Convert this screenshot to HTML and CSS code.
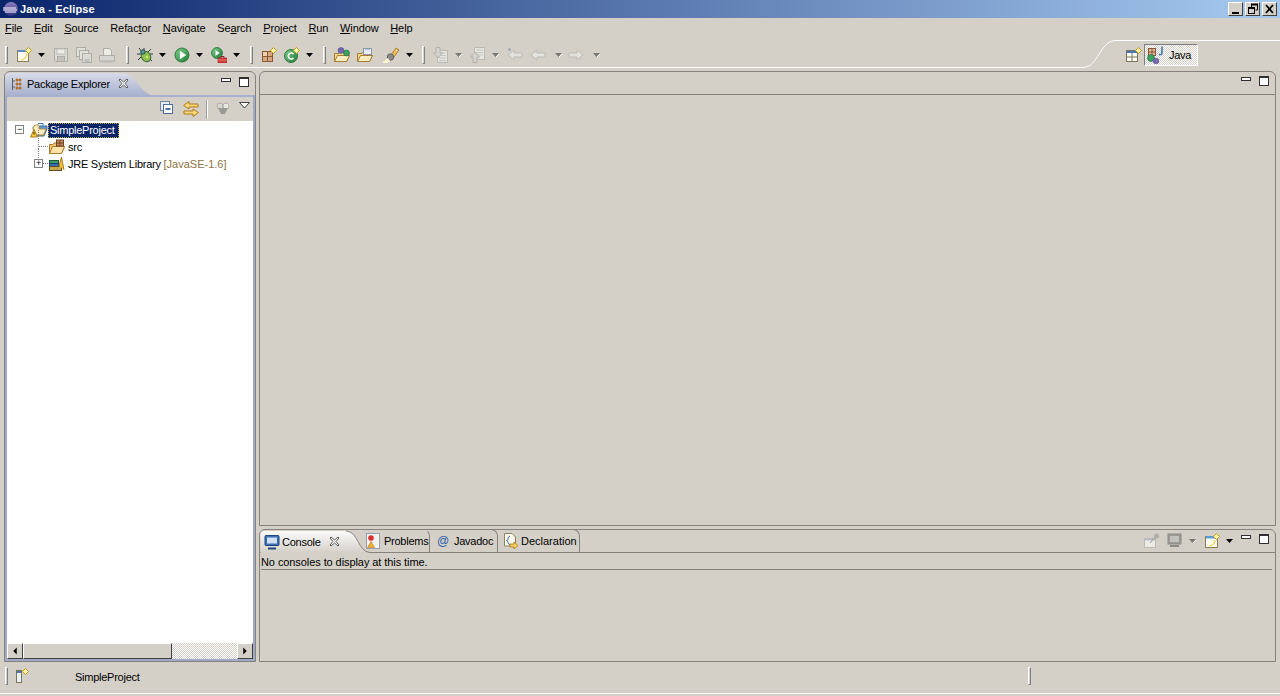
FILE: index.html
```html
<!DOCTYPE html>
<html lang="en">
<head>
    <meta charset="UTF-8">
    <title>Java - Eclipse</title>
    <link rel="stylesheet" href="styles.css">
</head>
<body>

<svg class="icon-defs" width="0" height="0">
    <defs>
        <linearGradient id="greenBall" x1="0" y1="0" x2="1" y2="1"><stop offset="0" stop-color="#7fd08a"/><stop offset="1" stop-color="#1f7a3a"/></linearGradient>
        <linearGradient id="eclipseBall" x1="0" y1="0" x2="0" y2="1"><stop offset="0" stop-color="#8c80c0"/><stop offset="1" stop-color="#302c80"/></linearGradient>
        <symbol id="i-new" viewBox="0 0 16 16">
            <rect x="1.5" y="3.5" width="11" height="11" fill="#fdfdf4" stroke="#8e7d52"/><rect x="2" y="3" width="10" height="2" fill="#5c8ac4"/>
            <path d="M11 6 Q11 12 5 13" fill="none" stroke="#f4d668" stroke-width="1.4"/>
            <path d="M12.5 0.5 L15.5 3.5 L12.5 6.5 L9.5 3.5Z" fill="#fff6b0" stroke="#c79a10"/>
        </symbol>
        <symbol id="i-save" viewBox="0 0 16 16">
            <path d="M1.5 1.5H14.5V14.5H3L1.5 13Z" fill="#dcdad4" stroke="#aeaca6"/><rect x="4" y="2" width="8" height="5" fill="#eeede9" stroke="#bdbbb5"/><rect x="4.5" y="9.5" width="7" height="5" fill="#c4c2bc" stroke="#aeaca6"/>
        </symbol>
        <symbol id="i-saveall" viewBox="0 0 16 16">
            <rect x="0.5" y="0.5" width="9" height="9" fill="#e2e0da" stroke="#aeaca6"/><rect x="3.5" y="3.5" width="9" height="9" fill="#e2e0da" stroke="#aeaca6"/><rect x="6.5" y="6.5" width="9" height="9" fill="#dcdad4" stroke="#aeaca6"/><rect x="8.5" y="12" width="5" height="3" fill="#c0beb8"/>
        </symbol>
        <symbol id="i-print" viewBox="0 0 16 16">
            <path d="M4.5 1.5H10.5L12.5 3.5V8.5H4.5Z" fill="#ecebe7" stroke="#aeaca6"/><rect x="0.5" y="8.5" width="15" height="5.5" fill="#d8d6d0" stroke="#aeaca6"/><rect x="2" y="14" width="12" height="1.5" fill="#bdbbb5"/>
        </symbol>
        <symbol id="i-debug" viewBox="0 0 16 16">
            <path d="M2 1L5 5M14 2L11 5M0 7H4M12 7H16M1 13L4 10M15 14L12 11M7 1L7 3" stroke="#2c3c3c" fill="none"/>
            <ellipse cx="9" cy="9.5" rx="4.5" ry="5.5" transform="rotate(-35 9 9.5)" fill="#90c050" stroke="#3c6c3c"/><circle cx="6" cy="5" r="2.2" fill="#5a9c9c" stroke="#2c4c4c"/><circle cx="10" cy="10" r="1.2" fill="#d8e868"/>
        </symbol>
        <symbol id="i-run" viewBox="0 0 16 16">
            <circle cx="8" cy="8" r="7" fill="url(#greenBall)" stroke="#2a7a40"/><path d="M6 4L12 8L6 12Z" fill="#fff" stroke="#d8f0d8" stroke-width="0.5"/>
        </symbol>
        <symbol id="i-ext" viewBox="0 0 16 16">
            <circle cx="6" cy="6" r="5.4" fill="url(#greenBall)" stroke="#2a7a40"/><path d="M4.5 3L8.5 6L4.5 9Z" fill="#fff"/>
            <rect x="7" y="11" width="9" height="5" fill="#d83c3c" stroke="#982020" stroke-width="0.6"/><path d="M10 11V9.5H13V11" fill="none" stroke="#982020"/><path d="M7 13H16" stroke="#f0a0a0" stroke-width="0.6"/>
        </symbol>
        <symbol id="i-pkg" viewBox="0 0 16 16">
            <rect x="1.5" y="4.5" width="10" height="10" fill="#d8a880" stroke="#8a5a38"/><path d="M6.5 4.5V14.5M1.5 9.5H11.5" stroke="#8a5a38"/><rect x="2" y="5" width="4" height="4" fill="#f0d0b0"/>
            <path d="M12.5 0.5 L15.5 3.5 L12.5 6.5 L9.5 3.5Z" fill="#fff6b0" stroke="#c79a10"/>
        </symbol>
        <symbol id="i-class" viewBox="0 0 16 16">
            <circle cx="7" cy="9" r="6.5" fill="url(#greenBall)" stroke="#2a7a40"/><path d="M9.5 7A3 3 0 1 0 9.5 11" fill="none" stroke="#fff" stroke-width="1.6"/>
            <path d="M12.5 0.5 L15.5 3.5 L12.5 6.5 L9.5 3.5Z" fill="#fff6b0" stroke="#c79a10"/>
        </symbol>
        <symbol id="i-openprj" viewBox="0 0 16 16">
            <path d="M0.5 14.5V6.5H5L6 5H11V8.5H15.5L12.5 14.5Z" fill="#f8d890" stroke="#a87c30"/><path d="M0.5 14.5L3.5 8.5H15.5L12.5 14.5Z" fill="#fcecc0" stroke="#a87c30"/>
            <circle cx="7" cy="3.5" r="3" fill="#7868b0" stroke="#50488c" stroke-width="0.6"/><circle cx="12.5" cy="6" r="3" fill="#3ca060" stroke="#206c40" stroke-width="0.6"/>
        </symbol>
        <symbol id="i-opentype" viewBox="0 0 16 16">
            <path d="M0.5 14.5V6.5H5L6 5H13V8.5H15.5L12.5 14.5Z" fill="#f8d890" stroke="#a87c30"/><rect x="6.5" y="1.5" width="8" height="6" fill="#e8ecf8" stroke="#9098a8"/><rect x="8" y="1" width="5" height="1.5" fill="#8898b8"/><path d="M0.5 14.5L3.5 8.5H15.5L12.5 14.5Z" fill="#fcecc0" stroke="#a87c30"/>
        </symbol>
        <symbol id="i-search" viewBox="0 0 18 16">
            <path d="M9 8L14 1L17 3L12 10Z" fill="#f0b850" stroke="#b08030"/><circle cx="14.5" cy="3.5" r="0.8" fill="#fff"/><circle cx="8.5" cy="10" r="3.2" fill="#8c8c8c" stroke="#606060"/><path d="M1 15L6 11L8 14L5 16H1Z" fill="#fff8d0"/>
        </symbol>
        <symbol id="i-nextann" viewBox="0 0 16 16">
            <rect x="4.5" y="3.5" width="10" height="12" fill="#e6e4de" stroke="#bbb9b3"/><path d="M6 6H13M6 8.5H13M6 11H13M6 13.5H13" stroke="#c8c6c0"/><path d="M3 0.5H7V6H9.5L5 11L0.5 6H3Z" fill="#d4d2cc" stroke="#b4b2ac"/>
        </symbol>
        <symbol id="i-prevann" viewBox="0 0 16 16">
            <rect x="4.5" y="0.5" width="10" height="12" fill="#e6e4de" stroke="#bbb9b3"/><path d="M6 3H13M6 5.5H13M6 8H13" stroke="#c8c6c0"/><path d="M3 15.5H7V10H9.5L5 5L0.5 10H3Z" fill="#d4d2cc" stroke="#b4b2ac"/>
        </symbol>
        <symbol id="i-last" viewBox="0 0 16 16">
            <path d="M7 3L1 8L7 13V10H15V6H7Z" fill="#e4e2dc" stroke="#bcbab4"/><circle cx="2.5" cy="2.5" r="1.5" fill="#a8a8b0"/>
        </symbol>
        <symbol id="i-back" viewBox="0 0 16 16"><path d="M7 3L1 8L7 13V10H15V6H7Z" fill="#e4e2dc" stroke="#bcbab4"/></symbol>
        <symbol id="i-fwd" viewBox="0 0 16 16"><path d="M9 3L15 8L9 13V10H1V6H9Z" fill="#e4e2dc" stroke="#bcbab4"/></symbol>
        <symbol id="i-persp" viewBox="0 0 16 16">
            <rect x="0.5" y="3.5" width="11" height="11" fill="#fbfbf4" stroke="#7a7458"/><rect x="1" y="4" width="10" height="2" fill="#4878b8"/><path d="M6 6V14.5M1 10H11" stroke="#7a7458"/>
            <path d="M12.5 0.5 L15.5 3.5 L12.5 6.5 L9.5 3.5Z" fill="#fff6b0" stroke="#c79a10"/>
        </symbol>
        <symbol id="i-java" viewBox="0 0 18 18">
            <rect x="1.5" y="2.5" width="7" height="7" fill="#e0b898" stroke="#8a5a38"/><path d="M5 2.5V9.5M1.5 6H8.5" stroke="#8a5a38"/>
            <path d="M15 0.5V7Q15 9 12 8.5" fill="none" stroke="#3c78b8" stroke-width="1.6"/>
            <circle cx="4" cy="12" r="3.5" fill="#3ca060" stroke="#206c40" stroke-width="0.6"/><circle cx="9" cy="15" r="2.8" fill="#7868b0" stroke="#50488c" stroke-width="0.6"/>
        </symbol>
        <symbol id="i-pkgex" viewBox="0 0 16 16">
            <path d="M2.5 2V14" stroke="#606060"/><path d="M2.5 5H5M2.5 11H5" stroke="#606060"/>
            <path d="M6 3H8V5H6ZM9 3H11V5H9ZM6 7H8V9H6ZM9 7H11V9H9ZM6 11H8V13H6ZM9 11H11V13H9Z" fill="#d88028" stroke="#a05c18" stroke-width="0.6"/>
        </symbol>
        <symbol id="i-collapse" viewBox="0 0 16 16">
            <rect x="0.5" y="0.5" width="9" height="9" fill="#e8ecf4" stroke="#7088a8"/><rect x="3.5" y="3.5" width="9" height="9" fill="#fff" stroke="#4c6c98"/><path d="M5.5 8H10.5" stroke="#1c4c98" stroke-width="1.6"/>
        </symbol>
        <symbol id="i-link" viewBox="0 0 16 16">
            <path d="M6 0.5L0.5 4.5L6 8V6H15V3H6Z" fill="#f8d878" stroke="#b07c18"/><path d="M10 8V10H1V13H10V15.5L15.5 11.5Z" fill="#f8d878" stroke="#b07c18"/>
        </symbol>
        <symbol id="i-filter" viewBox="0 0 16 16">
            <circle cx="5" cy="5" r="3" fill="#d8d6d0" stroke="#b0aea8"/><circle cx="11" cy="5" r="3" fill="#e8e6e0" stroke="#b0aea8"/><path d="M3 7L6 13H10L13 7Z" fill="#9c9a94"/>
        </symbol>
        <symbol id="i-project" viewBox="0 0 18 16">
            <path d="M8 1.5H13V3.5" fill="none" stroke="#3c78b8"/><path d="M3 5H9L10 4H17V7L14 14H5Z" fill="#5c9cd8" stroke="#406890"/>
            <path d="M3 5.5L5 3H9V7H16L13.5 13H4Z" fill="#fcecc0" stroke="#b09040"/>
            <path d="M4 7.5L7.5 15H0.5Z" fill="#f8c840" stroke="#a87c18"/><path d="M4 10V12.5" stroke="#402000"/>
        </symbol>
        <symbol id="i-src" viewBox="0 0 16 16">
            <path d="M0.5 14.5V5.5H4L5 4H12V7.5H15.5L12.5 14.5Z" fill="#f0c870" stroke="#a87c30"/><path d="M0.5 14.5L3.5 7.5H15.5L12.5 14.5Z" fill="#fce4a8" stroke="#a87c30"/>
            <rect x="7.5" y="1" width="7" height="6" fill="#c88c60" stroke="#704020"/><path d="M11 1V7M7.5 4H14.5" stroke="#704020"/>
        </symbol>
        <symbol id="i-jre" viewBox="0 0 16 16">
            <rect x="0.5" y="4.5" width="9" height="3" fill="#3c9c6c" stroke="#20583c"/><rect x="0.5" y="7.5" width="9" height="3" fill="#3c6cb0" stroke="#203c70"/><rect x="0.5" y="10.5" width="12" height="4" fill="#c8a850" stroke="#605020"/>
            <path d="M10 10L12.5 1L15 14" fill="#f0c040" stroke="#a87c18"/>
        </symbol>
        <symbol id="i-console" viewBox="0 0 16 16">
            <rect x="1" y="1.5" width="14" height="10" rx="1" fill="#3c70b4" stroke="#1c4480"/><rect x="3" y="3.5" width="10" height="6" fill="#cfe0f4"/><path d="M4 14.5H12" stroke="#1c4480" stroke-width="2"/>
        </symbol>
        <symbol id="i-problems" viewBox="0 0 16 16">
            <rect x="1.5" y="0.5" width="13" height="15" fill="#f4f2f0" stroke="#98a0b0"/><circle cx="6" cy="5" r="2.8" fill="#d83030"/><path d="M6 8.5L9.5 14.5H2.5Z" fill="#f0b030" stroke="#b07818" stroke-width="0.6"/>
        </symbol>
        <symbol id="i-decl" viewBox="0 0 16 16">
            <path d="M2.5 0.5H10L13.5 4V13H2.5Z" fill="#fbf8e8" stroke="#8c8468"/><path d="M8 3.5Q6 3.5 6 5.5V6.5L4.5 7.5L6 8.5V9.5Q6 11.5 8 11.5" fill="none" stroke="#3c6cb0"/>
            <path d="M8 11H12V9L16 12.5L12 16V14H8Z" fill="#f8d060" stroke="#a87c18" stroke-width="0.8"/>
        </symbol>
        <symbol id="i-pin" viewBox="0 0 16 16">
            <rect x="0.5" y="5.5" width="11" height="9" fill="#eceae4" stroke="#bcbab4"/><rect x="1" y="6" width="10" height="1.5" fill="#b8c0cc"/><path d="M6 10L12 3" stroke="#9c9a94"/><circle cx="12.5" cy="3" r="2.5" fill="#b0aea8"/>
        </symbol>
        <symbol id="i-disp" viewBox="0 0 16 16">
            <rect x="1" y="1" width="13" height="10" fill="#9c9a94" stroke="#8c8a84"/><rect x="3" y="3" width="9" height="6" fill="#c4c2bc"/><path d="M3 13H12" stroke="#8c8a84" stroke-width="2"/>
        </symbol>
        <symbol id="i-newcon" viewBox="0 0 16 16">
            <rect x="1.5" y="3.5" width="12" height="11" fill="#fdfdf4" stroke="#8e7d52"/><rect x="2" y="3" width="11" height="2.5" fill="#5c9cd4"/><path d="M11 7Q11 12 5 13" fill="none" stroke="#f4d668" stroke-width="1.4"/>
            <path d="M12.5 0.5 L15.5 3.5 L12.5 6.5 L9.5 3.5Z" fill="#fff6b0" stroke="#c79a10"/>
        </symbol>
        <symbol id="i-fast" viewBox="0 0 16 16">
            <rect x="3.5" y="2.5" width="5" height="12" fill="#e8f0fa" stroke="#7a7458"/><rect x="4" y="3" width="4" height="2" fill="#4878b8"/><path d="M12.5 0.5 L15.5 3.5 L12.5 6.5 L9.5 3.5Z" fill="#fff6b0" stroke="#c79a10"/>
        </symbol>
        <symbol id="i-close" viewBox="0 0 11 11">
            <path d="M1 2L2 1L5.5 4L9 1L10 2L7 5.5L10 9L9 10L5.5 7L2 10L1 9L4 5.5Z" fill="#fff" stroke="#5c5c5c"/>
        </symbol>
        <symbol id="arrow" viewBox="0 0 7 4"><path d="M0 0H7L3.5 4Z" fill="#000"/></symbol>
        <symbol id="arrow-off" viewBox="0 0 7 4"><path d="M0 0H7L3.5 4Z" fill="#7c7a74"/><path d="M4 4L7 1" stroke="#fff"/></symbol>
    </defs>
</svg>

<div class="titlebar">
    <svg class="title-icon" viewBox="0 0 16 16">
        <circle cx="9" cy="8" r="7" fill="url(#eclipseBall)"/><path d="M1 7H14M1 9H15M3 11H14" stroke="#fff" stroke-width="1"/>
    </svg>
    <span class="title-text">Java - Eclipse</span>
    <div class="win-buttons">
        <div class="win-btn"><svg viewBox="0 0 13 12"><path d="M3 10H10" stroke="#000" stroke-width="2"/></svg></div>
        <div class="win-btn"><svg viewBox="0 0 13 12"><path d="M5.5 4V1.5H11.5V7H9.5" fill="none" stroke="#000"/><path d="M5 1.5H12" stroke="#000" stroke-width="2"/><rect x="2.5" y="5" width="6" height="5.5" fill="none" stroke="#000"/><path d="M2 5H9" stroke="#000" stroke-width="2"/></svg></div>
        <div class="win-btn"><svg viewBox="0 0 13 12"><path d="M3 2L10 10M10 2L3 10" stroke="#000" stroke-width="1.8"/></svg></div>
    </div>
</div>

<div class="menubar">
    <span><u>F</u>ile</span>
    <span><u>E</u>dit</span>
    <span><u>S</u>ource</span>
    <span>Refac<u>t</u>or</span>
    <span><u>N</u>avigate</span>
    <span>Se<u>a</u>rch</span>
    <span><u>P</u>roject</span>
    <span><u>R</u>un</span>
    <span><u>W</u>indow</span>
    <span><u>H</u>elp</span>
</div>

<div class="toolbar">
    <i class="handle handle-first"></i>
    <svg class="tb"><use href="#i-new"/></svg><svg class="drop"><use href="#arrow"/></svg>
    <svg class="tb"><use href="#i-save"/></svg>
    <svg class="tb"><use href="#i-saveall"/></svg>
    <svg class="tb"><use href="#i-print"/></svg>
    <i class="handle"></i>
    <svg class="tb"><use href="#i-debug"/></svg><svg class="drop"><use href="#arrow"/></svg>
    <svg class="tb"><use href="#i-run"/></svg><svg class="drop"><use href="#arrow"/></svg>
    <svg class="tb"><use href="#i-ext"/></svg><svg class="drop"><use href="#arrow"/></svg>
    <i class="handle handle-tight"></i>
    <svg class="tb"><use href="#i-pkg"/></svg>
    <svg class="tb"><use href="#i-class"/></svg><svg class="drop"><use href="#arrow"/></svg>
    <i class="handle handle-tight"></i>
    <svg class="tb"><use href="#i-openprj"/></svg>
    <svg class="tb"><use href="#i-opentype"/></svg>
    <svg class="tb tb-search"><use href="#i-search"/></svg><svg class="drop"><use href="#arrow"/></svg>
    <i class="handle handle-tighter"></i>
    <svg class="tb"><use href="#i-nextann"/></svg><svg class="drop"><use href="#arrow-off"/></svg>
    <svg class="tb"><use href="#i-prevann"/></svg><svg class="drop"><use href="#arrow-off"/></svg>
    <svg class="tb"><use href="#i-last"/></svg>
    <svg class="tb"><use href="#i-back"/></svg><svg class="drop drop-far"><use href="#arrow-off"/></svg>
    <svg class="tb"><use href="#i-fwd"/></svg><svg class="drop drop-far"><use href="#arrow-off"/></svg>

    <svg class="persp-curve" viewBox="0 0 1280 30" preserveAspectRatio="none">
        <path d="M0 27.5H1083C1098 27.5 1100 0.5 1116 0.5H1280" fill="none" stroke="#fff"/>
    </svg>
    <div class="persp">
        <svg class="tb"><use href="#i-persp"/></svg>
        <div class="persp-btn"><svg class="persp-icon"><use href="#i-java"/></svg>Java</div>
    </div>
</div>

<div class="workbench">
    <div class="view left-view">
        <div class="view-head">
            <div class="tab-active">
                <svg class="tab-shape" viewBox="0 0 150 24" preserveAspectRatio="none">
                    <defs><linearGradient id="blueTab" x1="0" y1="0" x2="0" y2="1"><stop offset="0" stop-color="#d8dbe8"/><stop offset="1" stop-color="#a6b0ce"/></linearGradient></defs>
                    <path d="M0 24V5Q0 1 4 1H118C131 1 135 23 150 24Z" fill="url(#blueTab)"/>
                </svg>
                <svg class="ico"><use href="#i-pkgex"/></svg>
                <span>Package Explorer</span>
                <svg class="tab-x"><use href="#i-close"/></svg>
            </div>
            <div class="view-ctl"><i class="min-btn"></i><i class="max-btn"></i></div>
        </div>
        <div class="view-frame">
            <div class="view-bar">
                <svg class="ico"><use href="#i-collapse"/></svg>
                <svg class="ico"><use href="#i-link"/></svg>
                <i class="bar-sep"></i>
                <svg class="ico"><use href="#i-filter"/></svg>
                <svg class="menu-tri" viewBox="0 0 11 7"><path d="M0.5 0.5H10.5L5.5 6Z" fill="#fff" stroke="#444"/></svg>
            </div>
            <div class="tree">
                <div class="tree-row">
                    <i class="twisty">&minus;</i>
                    <svg class="tree-project"><use href="#i-project"/></svg>
                    <span class="selected">SimpleProject</span>
                </div>
                <div class="tree-row tree-child">
                    <i class="dots"></i>
                    <svg class="ico"><use href="#i-src"/></svg>
                    <span class="label">src</span>
                </div>
                <div class="tree-row tree-child last">
                    <i class="dots"></i>
                    <i class="twisty small">+</i>
                    <svg class="ico"><use href="#i-jre"/></svg>
                    <span class="label">JRE System Library <span class="decor">[JavaSE-1.6]</span></span>
                </div>
            </div>
            <div class="hscroll">
                <div class="sb-btn"><svg viewBox="0 0 16 16"><path d="M10 4V12L6 8Z" fill="#000"/></svg></div>
                <div class="sb-thumb"></div>
                <div class="sb-track"></div>
                <div class="sb-btn"><svg viewBox="0 0 16 16"><path d="M6 4V12L10 8Z" fill="#000"/></svg></div>
            </div>
        </div>
    </div>

    <div class="right-col">
        <div class="view editor">
            <div class="view-head editor-head">
                <div class="view-ctl"><i class="min-btn"></i><i class="max-btn"></i></div>
            </div>
        </div>
        <div class="view console">
            <div class="view-head console-head">
                <div class="tab-active tab-console">
                    <svg class="tab-shape" viewBox="0 0 110 24" preserveAspectRatio="none">
                        <defs><linearGradient id="whiteTab" x1="0" y1="0" x2="0" y2="1"><stop offset="0" stop-color="#fbfbfa"/><stop offset="1" stop-color="#d4d0c8"/></linearGradient></defs>
                        <path d="M0.5 24V5Q0.5 1 4 1H86C98 1 98 23 110 23.5V24Z" fill="url(#whiteTab)"/>
                        <path d="M86 1C98 1 98 23 110 23.5" fill="none" stroke="#85827c"/>
                    </svg>
                    <svg class="ico"><use href="#i-console"/></svg>
                    <span>Console</span>
                    <svg class="tab-x"><use href="#i-close"/></svg>
                </div>
                <div class="tab tab-problems"><svg class="ico"><use href="#i-problems"/></svg><span>Problems</span></div>
                <div class="tab tab-javadoc"><span class="at">@</span><span>Javadoc</span></div>
                <div class="tab tab-decl"><svg class="ico"><use href="#i-decl"/></svg><span>Declaration</span></div>
                <div class="console-tools">
                    <svg class="ico"><use href="#i-pin"/></svg>
                    <svg class="ico"><use href="#i-disp"/></svg><svg class="drop"><use href="#arrow-off"/></svg>
                    <svg class="ico"><use href="#i-newcon"/></svg><svg class="drop"><use href="#arrow"/></svg>
                </div>
                <div class="view-ctl"><i class="min-btn"></i><i class="max-btn"></i></div>
            </div>
            <div class="console-msg">No consoles to display at this time.</div>
        </div>
    </div>
</div>

<div class="statusbar">
    <i class="handle"></i>
    <svg class="ico status-icon"><use href="#i-fast"/></svg>
    <span class="status-text">SimpleProject</span>
    <i class="handle status-end"></i>
</div>

</body>
</html>
```

FILE: styles.css
```css
* {
    box-sizing: border-box;
}

html, body {
    margin: 0;
    height: 696px;
    overflow: hidden;
}

body {
    display: flex;
    flex-direction: column;
    background-color: #d4d0c8;
    font-family: "Liberation Sans", Arial, sans-serif;
    font-size: 11px;
    letter-spacing: -0.25px;
    color: #000;
}

i {
    display: block;
    font-style: normal;
}

.icon-defs {
    position: absolute;
}

.ico {
    width: 16px;
    height: 16px;
    flex: none;
}

/* title bar */
.titlebar {
    display: flex;
    align-items: center;
    height: 18px;
    flex: none;
    padding: 0 3px 0 2px;
    background: linear-gradient(to right, #0a246a, #a6caf0);
}

.title-icon {
    width: 16px;
    height: 16px;
}

.title-text {
    margin-left: 2px;
    color: #fff;
    font-weight: bold;
    font-size: 11px;
    letter-spacing: 0.15px;
}

.win-buttons {
    display: flex;
    gap: 2px;
    margin-left: auto;
}

.win-btn {
    width: 15px;
    height: 14px;
    background-color: #d4d0c8;
    border: 1px solid;
    border-color: #fff #404040 #404040 #fff;
}

.win-btn svg {
    display: block;
    width: 13px;
    height: 12px;
}

/* menu */
.menubar {
    display: flex;
    align-items: center;
    gap: 11.6px;
    height: 20px;
    flex: none;
    padding-left: 5px;
    letter-spacing: -0.08px;
}

/* main toolbar */
.toolbar {
    position: relative;
    display: flex;
    align-items: center;
    gap: 7px;
    height: 33px;
    flex: none;
    padding-left: 5px;
}

.handle {
    width: 3px;
    height: 18px;
    flex: none;
    border: 1px solid;
    border-color: #fff #808080 #808080 #fff;
    margin-left: 4px;
    margin-right: 1px;
}

.handle-first {
    margin-left: 0;
}

.handle-tight {
    margin-left: 2px;
}

.handle-tighter {
    margin-left: 1px;
}

.tb {
    width: 16px;
    height: 16px;
    flex: none;
}

.tb-search {
    width: 18px;
    margin-left: 2px;
}

.drop {
    width: 7px;
    height: 4px;
    flex: none;
    margin-left: -1px;
    margin-right: 1px;
}

.drop-far {
    margin-left: 2px;
    margin-right: -1px;
}

.persp-curve {
    position: absolute;
    left: 0;
    top: 2px;
    width: 1280px;
    height: 30px;
    pointer-events: none;
}

.persp {
    display: flex;
    align-items: center;
    gap: 2px;
    position: absolute;
    left: 1126px;
    top: 6px;
}

.persp-btn {
    display: flex;
    align-items: center;
    gap: 4px;
    width: 54px;
    height: 22px;
    padding-left: 2px;
    border: 1px solid;
    border-color: #808080 #fff #fff #808080;
    background: repeating-conic-gradient(#fff 0 25%, #d4d0c8 0 50%) 0 0 / 2px 2px;
}

.persp-icon {
    width: 18px;
    height: 18px;
    flex: none;
}

/* views */
.workbench {
    display: flex;
    gap: 3px;
    height: 591px;
    flex: none;
    padding: 0 4px;
}

.view {
    display: flex;
    flex-direction: column;
    border: 1px solid #85827c;
    border-radius: 6px 6px 0 0;
}

.left-view {
    width: 252px;
    flex: none;
}

.right-col {
    display: flex;
    flex-direction: column;
    gap: 3px;
    flex: 1;
    min-width: 0;
}

.editor {
    height: 455px;
    flex: none;
}

.console {
    flex: 1;
}

.view-head {
    position: relative;
    display: flex;
    align-items: center;
    height: 23px;
    flex: none;
}

.editor-head {
    border-bottom: 1px solid #85827c;
}

.view-ctl {
    display: flex;
    align-items: flex-start;
    gap: 8px;
    margin-left: auto;
    margin-right: 6px;
    margin-bottom: 4px;
}

.min-btn {
    width: 10px;
    height: 4px;
    margin-top: 1px;
    border: 1px solid #303030;
    background-color: #fff;
}

.max-btn {
    width: 10px;
    height: 10px;
    border: 1px solid #303030;
    border-top-width: 2px;
    background-color: #fff;
}

.tab-active {
    position: relative;
    display: flex;
    align-items: center;
    width: 150px;
    height: 24px;
    flex: none;
    padding-left: 5px;
}

.tab-active > svg.ico,
.tab-active > span,
.tab-x {
    position: relative;
}

.tab-active > span {
    margin-left: 1px;
}

.tab-shape {
    position: absolute;
    left: 0;
    top: 0;
    width: 100%;
    height: 100%;
}

.tab-x {
    width: 11px;
    height: 11px;
    margin-left: 8px;
    flex: none;
}

.view-frame {
    display: flex;
    flex-direction: column;
    flex: 1;
    min-height: 0;
    border: 2px solid #a0a9c8;
    border-top: 0;
}

.view-bar {
    display: flex;
    align-items: center;
    gap: 7px;
    height: 26px;
    flex: none;
    padding: 0 2px 0 153px;
    border-top: 2px solid #a6b0ce;
}

.bar-sep {
    width: 2px;
    height: 19px;
    border-left: 1px solid #a0a0a0;
    border-right: 1px solid #fff;
}

.menu-tri {
    width: 11px;
    height: 7px;
    margin: 0 0 8px 1px;
    flex: none;
}

/* tree */
.tree {
    flex: 1;
    min-height: 0;
    background-color: #fff;
}

.tree-row {
    position: relative;
    display: flex;
    align-items: center;
    height: 17px;
    padding-left: 8px;
}

.twisty {
    width: 9px;
    height: 9px;
    flex: none;
    border: 1px solid #808080;
    background-color: #fff;
    font-size: 9px;
    line-height: 6px;
    text-align: center;
}

.tree-project {
    width: 18px;
    height: 16px;
    margin-left: 6px;
    flex: none;
}

.selected {
    margin-top: 1px;
    padding: 0 3px 0 1px;
    line-height: 13px;
    color: #fff;
    background-color: #0a246a;
    border: 1px dotted #c8b040;
}

.tree-child {
    padding-left: 42px;
}

.tree-child .label {
    margin-left: 3px;
}

.decor {
    color: #8c7340;
    letter-spacing: 0;
}

.dots {
    position: absolute;
    left: 31px;
    top: -8px;
    width: 10px;
    height: 17px;
    border-left: 1px dotted #808080;
    border-bottom: 1px dotted #808080;
}

.tree-child.last .dots {
    height: 16px;
    top: -7px;
}

.twisty.small {
    position: absolute;
    left: 27px;
    top: 4px;
}

/* scrollbar */
.hscroll {
    display: flex;
    height: 16px;
    flex: none;
}

.sb-btn {
    width: 16px;
    height: 16px;
    flex: none;
    background-color: #d4d0c8;
    border: 1px solid;
    border-color: #fff #404040 #404040 #fff;
}

.sb-btn svg {
    display: block;
    width: 14px;
    height: 14px;
}

.sb-thumb {
    width: 149px;
    flex: none;
    background-color: #d4d0c8;
    border: 1px solid;
    border-color: #fff #404040 #404040 #fff;
}

.sb-track {
    flex: 1;
    background: repeating-conic-gradient(#fff 0 25%, #d4d0c8 0 50%) 0 0 / 2px 2px;
}

/* console */
.console-head {
    align-items: center;
    border-bottom: 1px solid #85827c;
}

.tab-console {
    align-self: flex-start;
    width: 100px;
    height: 23px;
    padding-left: 4px;
}

.tab-console .tab-shape {
    width: 110px;
}

.tab-console > span {
    margin-left: 2px;
}

.tab {
    position: relative;
    display: flex;
    align-items: center;
    align-self: flex-start;
    height: 23px;
    margin-top: -1px;
    flex: none;
    border-right: 1px solid #85827c;
    border-top: 1px solid #85827c;
    border-top-right-radius: 7px;
}

.tab-problems {
    width: 70px;
    padding-left: 5px;
    border-top-color: transparent;
}

.tab-problems span,
.tab-decl span {
    margin-left: 3px;
}

.tab-javadoc {
    width: 68px;
    padding-left: 7px;
}

.at {
    width: 17px;
    color: #2c5ca8;
    font-size: 12px;
}

.tab-decl {
    width: 82px;
    padding-left: 4px;
    letter-spacing: 0;
}

.console-tools {
    display: flex;
    align-items: center;
    gap: 7px;
    margin-left: auto;
}

.console-head .view-ctl {
    margin-left: 7px;
}

.console-msg {
    margin: 0 3px 0 1px;
    padding-top: 3px;
    height: 17px;
    border-bottom: 1px solid #85827c;
    letter-spacing: -0.08px;
}

/* status bar */
.statusbar {
    display: flex;
    align-items: center;
    height: 32px;
    flex: none;
    padding: 0 0 2px 5px;
    border-bottom: 1px solid #fff;
}

.statusbar .handle {
    margin: 0 0 2px;
}

.status-icon {
    margin: 0 0 2px 5px;
}

.status-text {
    margin-left: 46px;
}

.statusbar .status-end {
    margin: 0 249px 2px auto;
}
```
